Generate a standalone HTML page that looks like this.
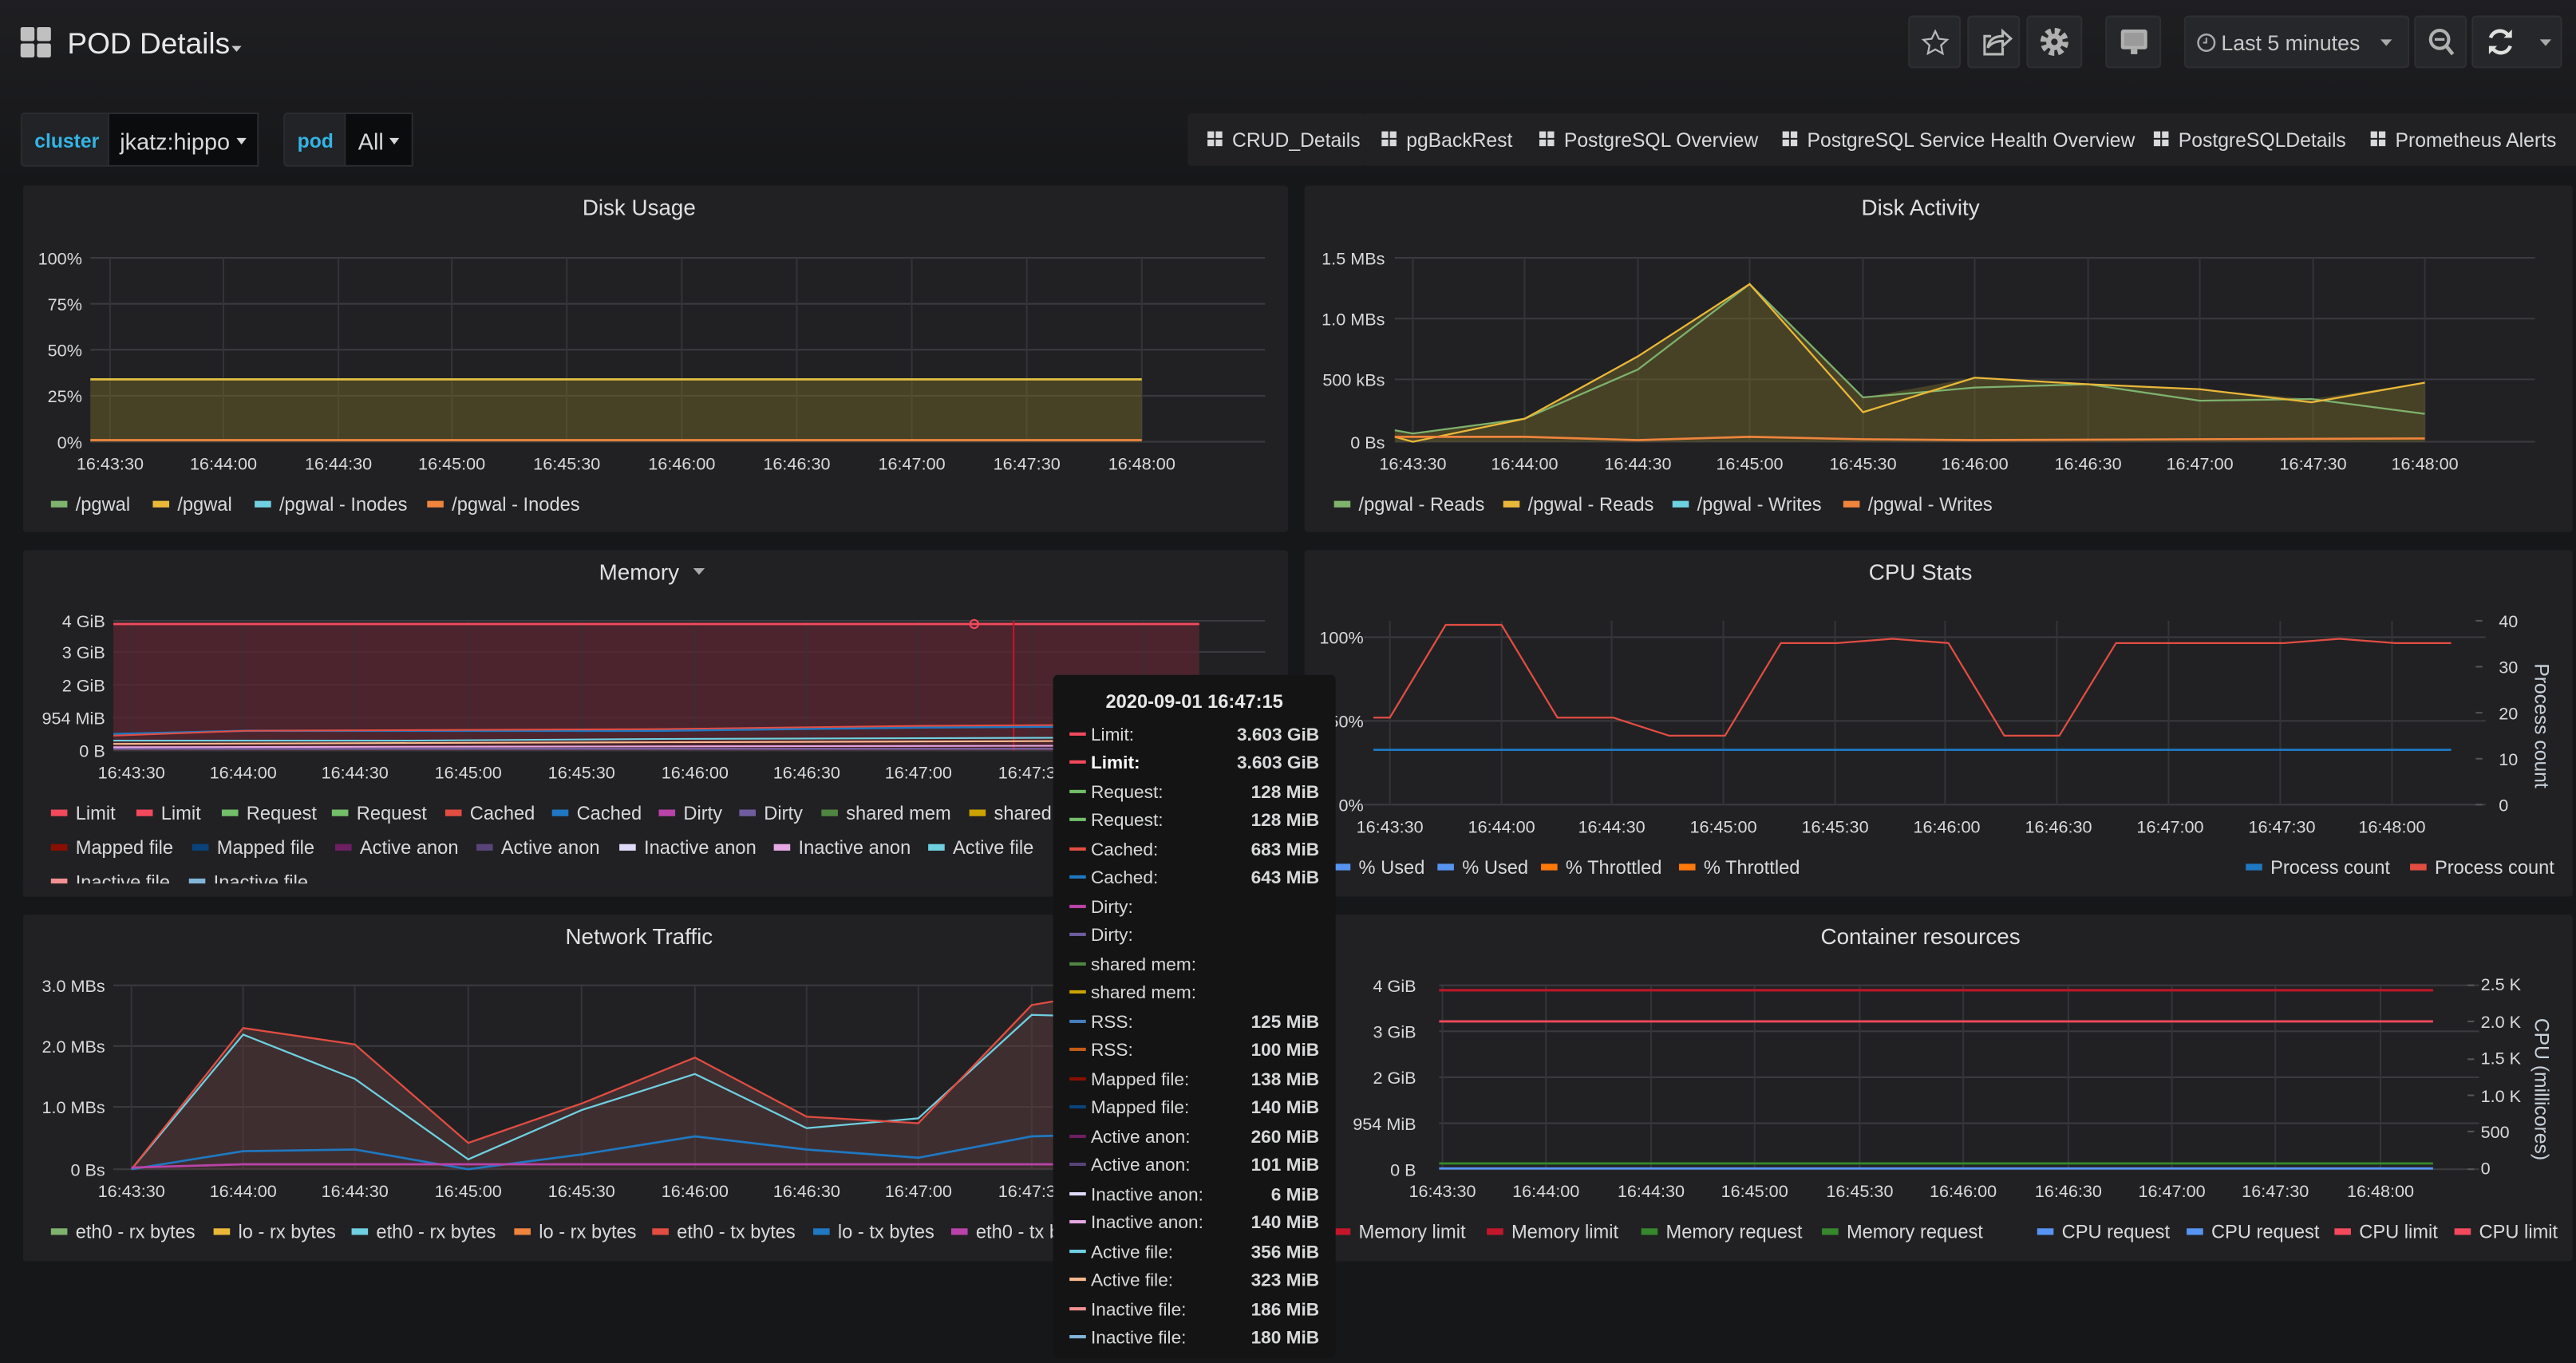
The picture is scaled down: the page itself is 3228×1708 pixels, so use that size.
<!DOCTYPE html>
<html><head><meta charset="utf-8">
<style>
html,body{margin:0;padding:0;background:#161719;width:3228px;height:1708px;overflow:hidden}
svg{display:block}
text{font-family:"Liberation Sans",sans-serif;fill:#d8d9da}
.t{font-size:10.5px;fill:#c7d0d9}
.h{font-size:13.5px;fill:#e0e0e0;text-anchor:middle}
.g{stroke:#3a3b3e;stroke-width:1}
.gv{stroke:#333437;stroke-width:1}
.lg{font-size:11.5px;fill:#d8d9da}
.tt{font-size:11px;fill:#d8d9da;font-weight:bold}
</style></head><body>
<svg width="3228" height="1708" viewBox="0 0 1568 830" preserveAspectRatio="none" xmlns="http://www.w3.org/2000/svg">
<defs>
<linearGradient id="top" x1="0" y1="0" x2="0" y2="1"><stop offset="0" stop-color="#1f1f22"/><stop offset="1" stop-color="#161719"/></linearGradient>
</defs>
<rect width="1568" height="830" fill="#161719"/>
<rect width="1568" height="110" fill="url(#top)"/>
<!-- header -->
<g fill="#c0c0c0"><rect x="12.5" y="16.5" width="8.5" height="8.5" rx="1.2"/><rect x="22.5" y="16.5" width="8.5" height="8.5" rx="1.2"/><rect x="12.5" y="26.5" width="8.5" height="8.5" rx="1.2"/><rect x="22.5" y="26.5" width="8.5" height="8.5" rx="1.2"/></g>
<text x="41" y="32.5" style="font-size:18px;fill:#e8e8e8">POD Details</text>
<path d="M141 28 l6 0 l-3 3.5z" fill="#c8c8c8"/>
<g fill="#26272a" stroke="#2e2f32">
<rect x="1162" y="10" width="31" height="31" rx="2"/><rect x="1198" y="10" width="31" height="31" rx="2"/><rect x="1234" y="10" width="33" height="31" rx="2"/>
<rect x="1282" y="10" width="33" height="31" rx="2"/><rect x="1330" y="10" width="136" height="31" rx="2"/><rect x="1470" y="10" width="31" height="31" rx="2"/><rect x="1505" y="10" width="54" height="31" rx="2"/>
</g>
<path d="M1178 19 l2.2 4.6 5 .6 -3.7 3.4 1 5 -4.5 -2.5 -4.5 2.5 1 -5 -3.7 -3.4 5 -.6z" fill="none" stroke="#b8b8b8" stroke-width="1.1"/>
<path d="M1212 22 h-4 v11 h11 v-4 M1210 29 q1 -7 9 -7 v-3 l5 4.5 -5 4.5 v-3 q-6 0 -9 4z" fill="none" stroke="#b8b8b8" stroke-width="1.5"/>
<circle cx="1250.5" cy="25.5" r="6.5" fill="none" stroke="#b0b0b0" stroke-width="4" stroke-dasharray="3 2.1"/><circle cx="1250.5" cy="25.5" r="5" fill="#b0b0b0"/><circle cx="1250.5" cy="25.5" r="2" fill="#26272a"/>
<rect x="1291" y="18" width="16" height="12" rx="1.5" fill="#b0b0b0"/><rect x="1293" y="20" width="12" height="8" fill="#9a9a9a"/><rect x="1297" y="30" width="4" height="3" fill="#b0b0b0"/>
<circle cx="1343" cy="26" r="5" fill="none" stroke="#aaa" stroke-width="1.2"/><path d="M1343 23 v3 h-2" stroke="#aaa" fill="none"/>
<text x="1352" y="30.5" style="font-size:13px;fill:#c8c8c8">Last 5 minutes</text>
<path d="M1449 24 l7 0 -3.5 4z" fill="#aaa"/>
<circle cx="1485" cy="24" r="5.5" fill="none" stroke="#b0b0b0" stroke-width="2"/><path d="M1489 28 l4 5" stroke="#b0b0b0" stroke-width="2.2"/><path d="M1482 24 h6" stroke="#b0b0b0" stroke-width="1.6"/>
<path d="M1516 23 a6 6 0 0 1 11 -1 M1528 28 a6 6 0 0 1 -11 1" stroke="#e0e0e0" stroke-width="2.2" fill="none"/><path d="M1529 18 v5 h-5z M1515 33 v-5 h5z" fill="#e0e0e0"/>
<path d="M1546 24 l7 0 -3.5 4z" fill="#aaa"/>
<!-- variables -->
<rect x="13" y="69" width="54" height="32" rx="2" fill="#222326" stroke="#2a2b2e"/>
<text x="21" y="90" style="font-size:12px;fill:#33b5e5;font-weight:bold">cluster</text>
<rect x="66" y="69" width="91" height="32" fill="#0b0c0e" stroke="#2a2b2e"/>
<text x="73" y="91" style="font-size:14px;fill:#d8d9da">jkatz:hippo</text>
<path d="M144 84 l6 0 -3 4z" fill="#d8d9da"/>
<rect x="173" y="69" width="38" height="32" rx="2" fill="#222326" stroke="#2a2b2e"/>
<text x="181" y="90" style="font-size:12px;fill:#33b5e5;font-weight:bold">pod</text>
<rect x="210" y="69" width="41" height="32" fill="#0b0c0e" stroke="#2a2b2e"/>
<text x="218" y="91" style="font-size:14px;fill:#d8d9da">All</text>
<path d="M237 84 l6 0 -3 4z" fill="#d8d9da"/>
<!-- links -->
<g fill="#212124"><rect x="723" y="69" width="108" height="32" rx="2"/><rect x="831" y="69" width="97" height="32"/><rect x="928" y="69" width="147" height="32"/><rect x="1075" y="69" width="226" height="32"/><rect x="1301" y="69" width="133" height="32"/><rect x="1434" y="69" width="134" height="32"/></g>
<g fill="#d8d9da">
<g id="li"><rect x="735" y="80" width="4" height="4"/><rect x="740" y="80" width="4" height="4"/><rect x="735" y="85" width="4" height="4"/><rect x="740" y="85" width="4" height="4"/></g>
<use href="#li" x="106"/><use href="#li" x="202"/><use href="#li" x="350"/><use href="#li" x="576"/><use href="#li" x="708"/>
</g>
<g style="font-size:12px"><text x="750" y="89.5">CRUD_Details</text><text x="856" y="89.5">pgBackRest</text><text x="952" y="89.5">PostgreSQL Overview</text><text x="1100" y="89.5">PostgreSQL Service Health Overview</text><text x="1326" y="89.5">PostgreSQLDetails</text><text x="1458" y="89.5">Prometheus Alerts</text></g>

<!-- panels -->
<g fill="#212124"><rect x="14" y="113" width="770" height="211" rx="2"/><rect x="794" y="113" width="772" height="211" rx="2"/><rect x="14" y="335" width="770" height="211" rx="2"/><rect x="794" y="335" width="772" height="211" rx="2"/><rect x="14" y="557" width="770" height="211" rx="2"/><rect x="794" y="557" width="772" height="211" rx="2"/></g>

<!-- Disk Usage -->
<text class="h" x="389" y="131">Disk Usage</text>
<g class="g"><path d="M55 157H770M55 185H770M55 213H770M55 241H770M55 269H770"/></g>
<g class="gv"><path d="M67 157V269M136 157V269M206 157V269M275 157V269M345 157V269M415 157V269M485 157V269M555 157V269M625 157V269M695 157V269"/></g>
<rect x="55" y="231" width="640" height="38" fill="#6e6428" opacity=".5"/>
<path d="M55 231H695" stroke="#e0c040" stroke-width="1.3"/><path d="M55 268H695" stroke="#ef843c" stroke-width="1.3"/>
<g class="t" text-anchor="end"><text x="50" y="161">100%</text><text x="50" y="189">75%</text><text x="50" y="217">50%</text><text x="50" y="245">25%</text><text x="50" y="273">0%</text></g>
<g class="t" text-anchor="middle"><text x="67" y="286">16:43:30</text><text x="136" y="286">16:44:00</text><text x="206" y="286">16:44:30</text><text x="275" y="286">16:45:00</text><text x="345" y="286">16:45:30</text><text x="415" y="286">16:46:00</text><text x="485" y="286">16:46:30</text><text x="555" y="286">16:47:00</text><text x="625" y="286">16:47:30</text><text x="695" y="286">16:48:00</text></g>
<g class="lg"><rect x="31" y="305" width="10" height="4" fill="#7eb26d"/><text x="46" y="311">/pgwal</text><rect x="93" y="305" width="10" height="4" fill="#eab839"/><text x="108" y="311">/pgwal</text><rect x="155" y="305" width="10" height="4" fill="#6ed0e0"/><text x="170" y="311">/pgwal - Inodes</text><rect x="260" y="305" width="10" height="4" fill="#ef843c"/><text x="275" y="311">/pgwal - Inodes</text></g>

<!-- Disk Activity -->
<text class="h" x="1169" y="131">Disk Activity</text>
<g class="g"><path d="M849 157H1543M849 194H1543M849 231H1543M849 269H1543"/></g>
<g class="gv"><path d="M860 157V269M928 157V269M997 157V269M1065 157V269M1134 157V269M1202 157V269M1271 157V269M1339 157V269M1408 157V269M1476 157V269"/></g>
<path d="M849 262 L860 264 L928 255 L997 217 L1065 173 L1134 242 L1202 230 L1271 234 L1339 237 L1407 243 L1476 233 V269 H849z" fill="#6e6428" opacity=".5"/>
<path d="M849 262 L860 264 L928 255 L997 225 L1065 173 L1134 242 L1202 236 L1271 234 L1339 244 L1407 243 L1476 252" stroke="#7eb26d" fill="none" stroke-width="1.1"/>
<path d="M849 266 L860 269 L928 255 L997 217 L1065 173 L1134 251 L1202 230 L1271 234 L1339 237 L1407 245 L1476 233" stroke="#eab839" fill="none" stroke-width="1.1"/>
<path d="M849 266 L928 266 L997 268 L1065 266 L1134 267.5 L1202 268 L1339 267.5 L1476 267" stroke="#ef843c" fill="none" stroke-width="1.3"/>
<g class="t" text-anchor="end"><text x="843" y="161">1.5 MBs</text><text x="843" y="198">1.0 MBs</text><text x="843" y="235">500 kBs</text><text x="843" y="273">0 Bs</text></g>
<g class="t" text-anchor="middle"><text x="860" y="286">16:43:30</text><text x="928" y="286">16:44:00</text><text x="997" y="286">16:44:30</text><text x="1065" y="286">16:45:00</text><text x="1134" y="286">16:45:30</text><text x="1202" y="286">16:46:00</text><text x="1271" y="286">16:46:30</text><text x="1339" y="286">16:47:00</text><text x="1408" y="286">16:47:30</text><text x="1476" y="286">16:48:00</text></g>
<g class="lg"><rect x="812" y="305" width="10" height="4" fill="#7eb26d"/><text x="827" y="311">/pgwal - Reads</text><rect x="915" y="305" width="10" height="4" fill="#eab839"/><text x="930" y="311">/pgwal - Reads</text><rect x="1018" y="305" width="10" height="4" fill="#6ed0e0"/><text x="1033" y="311">/pgwal - Writes</text><rect x="1122" y="305" width="10" height="4" fill="#ef843c"/><text x="1137" y="311">/pgwal - Writes</text></g>

<!-- Memory -->
<text class="h" x="389" y="353">Memory</text><path d="M422 346 l7 0 -3.5 4z" fill="#aaa"/>
<g class="g"><path d="M69 378H770M69 397H770M69 417H770M69 437H770M69 457H770"/></g>
<rect x="69" y="380" width="661" height="77" fill="#5a2630" opacity=".75"/>
<g class="gv" opacity=".6"><path d="M80 378V457M148 378V457M216 378V457M285 378V457M354 378V457M423 378V457M491 378V457M559 378V457M628 378V457M696 378V457"/></g>
<path d="M69 380H730" stroke="#f2495c" stroke-width="1.4"/>
<path d="M617 378V457" stroke="#c4162a" stroke-width="1"/>
<circle cx="593" cy="380" r="2.5" fill="none" stroke="#f2495c"/>
<path d="M69 447 L150 445 L400 445 L560 443 L730 442" stroke="#1f78c1" fill="none" stroke-width="1.3"/>
<path d="M69 448 L150 445 L400 444 L560 442 L730 441" stroke="#e24d42" fill="none" stroke-width="1"/>
<path d="M69 451 L250 451 L400 450 L730 449" stroke="#6ed0e0" fill="none"/>
<path d="M69 453 L400 452 L730 451" stroke="#f9ba8f" fill="none"/>
<path d="M69 455 L730 454" stroke="#e5a8e2" fill="none"/>
<path d="M69 456 L730 456" stroke="#806eb7" fill="none"/>
<g class="t" text-anchor="end"><text x="64" y="382">4 GiB</text><text x="64" y="401">3 GiB</text><text x="64" y="421">2 GiB</text><text x="64" y="441">954 MiB</text><text x="64" y="461">0 B</text></g>
<g class="t" text-anchor="middle"><text x="80" y="474">16:43:30</text><text x="148" y="474">16:44:00</text><text x="216" y="474">16:44:30</text><text x="285" y="474">16:45:00</text><text x="354" y="474">16:45:30</text><text x="423" y="474">16:46:00</text><text x="491" y="474">16:46:30</text><text x="559" y="474">16:47:00</text><text x="628" y="474">16:47:30</text></g>
<g class="lg">
<rect x="31" y="493" width="10" height="4" fill="#f2495c"/><text x="46" y="499">Limit</text>
<rect x="83" y="493" width="10" height="4" fill="#f2495c"/><text x="98" y="499">Limit</text>
<rect x="135" y="493" width="10" height="4" fill="#73bf69"/><text x="150" y="499">Request</text>
<rect x="202" y="493" width="10" height="4" fill="#73bf69"/><text x="217" y="499">Request</text>
<rect x="271" y="493" width="10" height="4" fill="#e24d42"/><text x="286" y="499">Cached</text>
<rect x="336" y="493" width="10" height="4" fill="#1f78c1"/><text x="351" y="499">Cached</text>
<rect x="401" y="493" width="10" height="4" fill="#ba43a9"/><text x="416" y="499">Dirty</text>
<rect x="450" y="493" width="10" height="4" fill="#705da0"/><text x="465" y="499">Dirty</text>
<rect x="500" y="493" width="10" height="4" fill="#508642"/><text x="515" y="499">shared mem</text>
<rect x="590" y="493" width="10" height="4" fill="#cca300"/><text x="605" y="499">shared mem</text>
<rect x="31" y="514" width="10" height="4" fill="#890f02"/><text x="46" y="520">Mapped file</text>
<rect x="117" y="514" width="10" height="4" fill="#0a437c"/><text x="132" y="520">Mapped file</text>
<rect x="204" y="514" width="10" height="4" fill="#6d1f62"/><text x="219" y="520">Active anon</text>
<rect x="290" y="514" width="10" height="4" fill="#584477"/><text x="305" y="520">Active anon</text>
<rect x="377" y="514" width="10" height="4" fill="#dedaf7"/><text x="392" y="520">Inactive anon</text>
<rect x="471" y="514" width="10" height="4" fill="#e5a8e2"/><text x="486" y="520">Inactive anon</text>
<rect x="565" y="514" width="10" height="4" fill="#6ed0e0"/><text x="580" y="520">Active file</text>
<rect x="31" y="535" width="10" height="4" fill="#f29191"/><text x="46" y="541">Inactive file</text>
<rect x="115" y="535" width="10" height="4" fill="#82b5d8"/><text x="130" y="541">Inactive file</text>
</g>
<rect x="14" y="538" width="770" height="8" fill="#212124"/>

<!-- CPU Stats -->
<text class="h" x="1169" y="353">CPU Stats</text>
<g class="g"><path d="M830 388H1513M830 439H1513M830 490H1513"/></g>
<g class="gv"><path d="M846 378V490M914 378V490M981 378V490M1049 378V490M1117 378V490M1184 378V490M1252 378V490M1320 378V490M1388 378V490M1456 378V490"/></g>
<path d="M836 437 L846 437 L880 380.5 L914 380.5 L948 437 L982 437 L1016 448 L1050 448 L1084 391.6 L1118 391.6 L1152 389 L1186 391.6 L1220 448 L1253.5 448 L1288 391.6 L1390 391.6 L1424 389 L1458 391.6 L1492 391.6" stroke="#e24d42" fill="none" stroke-width="1.1"/>
<path d="M836 456.6H1492" stroke="#1f78c1" stroke-width="1.3"/>
<g class="t" text-anchor="end"><text x="830" y="392">100%</text><text x="830" y="443">50%</text><text x="830" y="494">0%</text></g>
<g class="t"><path d="M1507 378h4M1507 406h4M1507 434h4M1507 462h4M1507 490h4" stroke="#555"/><text x="1521" y="382">40</text><text x="1521" y="410">30</text><text x="1521" y="438">20</text><text x="1521" y="466">10</text><text x="1521" y="494">0</text></g>
<text x="1543" y="404" transform="rotate(90 1543 404)" style="font-size:12px;fill:#c7d0d9">Process count</text>
<g class="t" text-anchor="middle"><text x="846" y="507">16:43:30</text><text x="914" y="507">16:44:00</text><text x="981" y="507">16:44:30</text><text x="1049" y="507">16:45:00</text><text x="1117" y="507">16:45:30</text><text x="1185" y="507">16:46:00</text><text x="1253" y="507">16:46:30</text><text x="1321" y="507">16:47:00</text><text x="1389" y="507">16:47:30</text><text x="1456" y="507">16:48:00</text></g>
<g class="lg"><rect x="812" y="526" width="10" height="4" fill="#5794f2"/><text x="827" y="532">% Used</text><rect x="875" y="526" width="10" height="4" fill="#5794f2"/><text x="890" y="532">% Used</text><rect x="938" y="526" width="10" height="4" fill="#ff780a"/><text x="953" y="532">% Throttled</text><rect x="1022" y="526" width="10" height="4" fill="#ff780a"/><text x="1037" y="532">% Throttled</text>
<rect x="1367" y="526" width="10" height="4" fill="#1f78c1"/><text x="1382" y="532">Process count</text><rect x="1467" y="526" width="10" height="4" fill="#e24d42"/><text x="1482" y="532">Process count</text></g>

<!-- Network Traffic -->
<text class="h" x="389" y="575">Network Traffic</text>
<g class="g"><path d="M69 600H770M69 637H770M69 674H770M69 712H770"/></g>
<g class="gv"><path d="M80 600V712M148 600V712M216 600V712M285 600V712M354 600V712M423 600V712M491 600V712M559 600V712M628 600V712"/></g>
<path d="M80 712 L148 626 L216 636 L285 696 L354 672 L423 644 L491 680 L559 684 L628 612 L700 600 V712z" fill="#5a3a3a" opacity=".55"/>
<path d="M80 712 L148 630 L216 657 L285 706 L354 676 L423 654 L491 687 L559 681 L628 618 L700 620" stroke="#6ed0e0" fill="none" stroke-width="1.1"/>
<path d="M80 712 L148 626 L216 636 L285 696 L354 672 L423 644 L491 680 L559 684 L628 612 L700 600" stroke="#e24d42" fill="none" stroke-width="1.1"/>
<path d="M80 712 L148 701 L216 700 L285 712 L354 703 L423 692 L491 700 L559 705 L628 692 L700 690" stroke="#1f78c1" fill="none" stroke-width="1.3"/>
<path d="M80 711 L148 709 L423 709 L628 709 L700 709" stroke="#ba43a9" fill="none" stroke-width="1.3"/>
<g class="t" text-anchor="end"><text x="64" y="604">3.0 MBs</text><text x="64" y="641">2.0 MBs</text><text x="64" y="678">1.0 MBs</text><text x="64" y="716">0 Bs</text></g>
<g class="t" text-anchor="middle"><text x="80" y="729">16:43:30</text><text x="148" y="729">16:44:00</text><text x="216" y="729">16:44:30</text><text x="285" y="729">16:45:00</text><text x="354" y="729">16:45:30</text><text x="423" y="729">16:46:00</text><text x="491" y="729">16:46:30</text><text x="559" y="729">16:47:00</text><text x="628" y="729">16:47:30</text></g>
<g class="lg">
<rect x="31" y="748" width="10" height="4" fill="#7eb26d"/><text x="46" y="754">eth0 - rx bytes</text>
<rect x="130" y="748" width="10" height="4" fill="#eab839"/><text x="145" y="754">lo - rx bytes</text>
<rect x="214" y="748" width="10" height="4" fill="#6ed0e0"/><text x="229" y="754">eth0 - rx bytes</text>
<rect x="313" y="748" width="10" height="4" fill="#ef843c"/><text x="328" y="754">lo - rx bytes</text>
<rect x="397" y="748" width="10" height="4" fill="#e24d42"/><text x="412" y="754">eth0 - tx bytes</text>
<rect x="495" y="748" width="10" height="4" fill="#1f78c1"/><text x="510" y="754">lo - tx bytes</text>
<rect x="579" y="748" width="10" height="4" fill="#ba43a9"/><text x="594" y="754">eth0 - tx bytes</text>
</g>

<!-- Container resources -->
<text class="h" x="1169" y="575">Container resources</text>
<g class="g"><path d="M876 600H1509M876 628H1509M876 656H1509M876 684H1509M876 712H1509"/></g>
<g class="gv"><path d="M878 600V712M941 600V712M1005 600V712M1068 600V712M1132 600V712M1195 600V712M1259 600V712M1322 600V712M1385 600V712M1449 600V712"/></g>
<path d="M876 603H1481" stroke="#c4162a" stroke-width="1.4"/>
<path d="M876 622H1481" stroke="#f2495c" stroke-width="1.4"/>
<path d="M876 708.5H1481" stroke="#37872d" stroke-width="1.4"/>
<path d="M876 711.5H1481" stroke="#5794f2" stroke-width="1.4"/>
<g class="t" text-anchor="end"><text x="862" y="604">4 GiB</text><text x="862" y="632">3 GiB</text><text x="862" y="660">2 GiB</text><text x="862" y="688">954 MiB</text><text x="862" y="716">0 B</text></g>
<g class="t"><path d="M1502 600h4M1502 622h4M1502 645h4M1502 667h4M1502 689h4M1502 712h4" stroke="#555"/><text x="1510" y="603">2.5 K</text><text x="1510" y="626">2.0 K</text><text x="1510" y="648">1.5 K</text><text x="1510" y="671">1.0 K</text><text x="1510" y="693">500</text><text x="1510" y="715">0</text></g>
<text x="1543" y="620" transform="rotate(90 1543 620)" style="font-size:12px;fill:#c7d0d9">CPU (millicores)</text>
<g class="t" text-anchor="middle"><text x="878" y="729">16:43:30</text><text x="941" y="729">16:44:00</text><text x="1005" y="729">16:44:30</text><text x="1068" y="729">16:45:00</text><text x="1132" y="729">16:45:30</text><text x="1195" y="729">16:46:00</text><text x="1259" y="729">16:46:30</text><text x="1322" y="729">16:47:00</text><text x="1385" y="729">16:47:30</text><text x="1449" y="729">16:48:00</text></g>
<g class="lg">
<rect x="812" y="748" width="10" height="4" fill="#c4162a"/><text x="827" y="754">Memory limit</text>
<rect x="905" y="748" width="10" height="4" fill="#c4162a"/><text x="920" y="754">Memory limit</text>
<rect x="999" y="748" width="10" height="4" fill="#37872d"/><text x="1014" y="754">Memory request</text>
<rect x="1109" y="748" width="10" height="4" fill="#37872d"/><text x="1124" y="754">Memory request</text>
<rect x="1240" y="748" width="10" height="4" fill="#5794f2"/><text x="1255" y="754">CPU request</text>
<rect x="1331" y="748" width="10" height="4" fill="#5794f2"/><text x="1346" y="754">CPU request</text>
<rect x="1421" y="748" width="10" height="4" fill="#f2495c"/><text x="1436" y="754">CPU limit</text>
<rect x="1494" y="748" width="10" height="4" fill="#f2495c"/><text x="1509" y="754">CPU limit</text>
</g>

<!-- tooltip -->
<rect x="641" y="411" width="172" height="416" rx="3" fill="#141414"/>
<text class="tt" x="727" y="431" text-anchor="middle" style="font-size:11.5px;fill:#e8e8e8">2020-09-01 16:47:15</text>
<g class="tt">
<rect x="651" y="446" width="10" height="2" fill="#f2495c"/><text x="664" y="451" style="font-weight:normal">Limit:</text><text x="803" y="451" text-anchor="end">3.603 GiB</text>
<rect x="651" y="463" width="10" height="2" fill="#f2495c"/><text x="664" y="468" style="fill:#fff">Limit:</text><text x="803" y="468" text-anchor="end">3.603 GiB</text>
<rect x="651" y="481" width="10" height="2" fill="#73bf69"/><text x="664" y="486" style="font-weight:normal">Request:</text><text x="803" y="486" text-anchor="end">128 MiB</text>
<rect x="651" y="498" width="10" height="2" fill="#73bf69"/><text x="664" y="503" style="font-weight:normal">Request:</text><text x="803" y="503" text-anchor="end">128 MiB</text>
<rect x="651" y="516" width="10" height="2" fill="#e24d42"/><text x="664" y="521" style="font-weight:normal">Cached:</text><text x="803" y="521" text-anchor="end">683 MiB</text>
<rect x="651" y="533" width="10" height="2" fill="#1f78c1"/><text x="664" y="538" style="font-weight:normal">Cached:</text><text x="803" y="538" text-anchor="end">643 MiB</text>
<rect x="651" y="551" width="10" height="2" fill="#ba43a9"/><text x="664" y="556" style="font-weight:normal">Dirty:</text>
<rect x="651" y="568" width="10" height="2" fill="#705da0"/><text x="664" y="573" style="font-weight:normal">Dirty:</text>
<rect x="651" y="586" width="10" height="2" fill="#508642"/><text x="664" y="591" style="font-weight:normal">shared mem:</text>
<rect x="651" y="603" width="10" height="2" fill="#cca300"/><text x="664" y="608" style="font-weight:normal">shared mem:</text>
<rect x="651" y="621" width="10" height="2" fill="#447ebc"/><text x="664" y="626" style="font-weight:normal">RSS:</text><text x="803" y="626" text-anchor="end">125 MiB</text>
<rect x="651" y="638" width="10" height="2" fill="#c15c17"/><text x="664" y="643" style="font-weight:normal">RSS:</text><text x="803" y="643" text-anchor="end">100 MiB</text>
<rect x="651" y="656" width="10" height="2" fill="#890f02"/><text x="664" y="661" style="font-weight:normal">Mapped file:</text><text x="803" y="661" text-anchor="end">138 MiB</text>
<rect x="651" y="673" width="10" height="2" fill="#0a437c"/><text x="664" y="678" style="font-weight:normal">Mapped file:</text><text x="803" y="678" text-anchor="end">140 MiB</text>
<rect x="651" y="691" width="10" height="2" fill="#6d1f62"/><text x="664" y="696" style="font-weight:normal">Active anon:</text><text x="803" y="696" text-anchor="end">260 MiB</text>
<rect x="651" y="708" width="10" height="2" fill="#584477"/><text x="664" y="713" style="font-weight:normal">Active anon:</text><text x="803" y="713" text-anchor="end">101 MiB</text>
<rect x="651" y="726" width="10" height="2" fill="#dedaf7"/><text x="664" y="731" style="font-weight:normal">Inactive anon:</text><text x="803" y="731" text-anchor="end">6 MiB</text>
<rect x="651" y="743" width="10" height="2" fill="#e5a8e2"/><text x="664" y="748" style="font-weight:normal">Inactive anon:</text><text x="803" y="748" text-anchor="end">140 MiB</text>
<rect x="651" y="761" width="10" height="2" fill="#6ed0e0"/><text x="664" y="766" style="font-weight:normal">Active file:</text><text x="803" y="766" text-anchor="end">356 MiB</text>
<rect x="651" y="778" width="10" height="2" fill="#f9ba8f"/><text x="664" y="783" style="font-weight:normal">Active file:</text><text x="803" y="783" text-anchor="end">323 MiB</text>
<rect x="651" y="796" width="10" height="2" fill="#f29191"/><text x="664" y="801" style="font-weight:normal">Inactive file:</text><text x="803" y="801" text-anchor="end">186 MiB</text>
<rect x="651" y="813" width="10" height="2" fill="#82b5d8"/><text x="664" y="818" style="font-weight:normal">Inactive file:</text><text x="803" y="818" text-anchor="end">180 MiB</text>
</g>
</svg>
</body></html>
